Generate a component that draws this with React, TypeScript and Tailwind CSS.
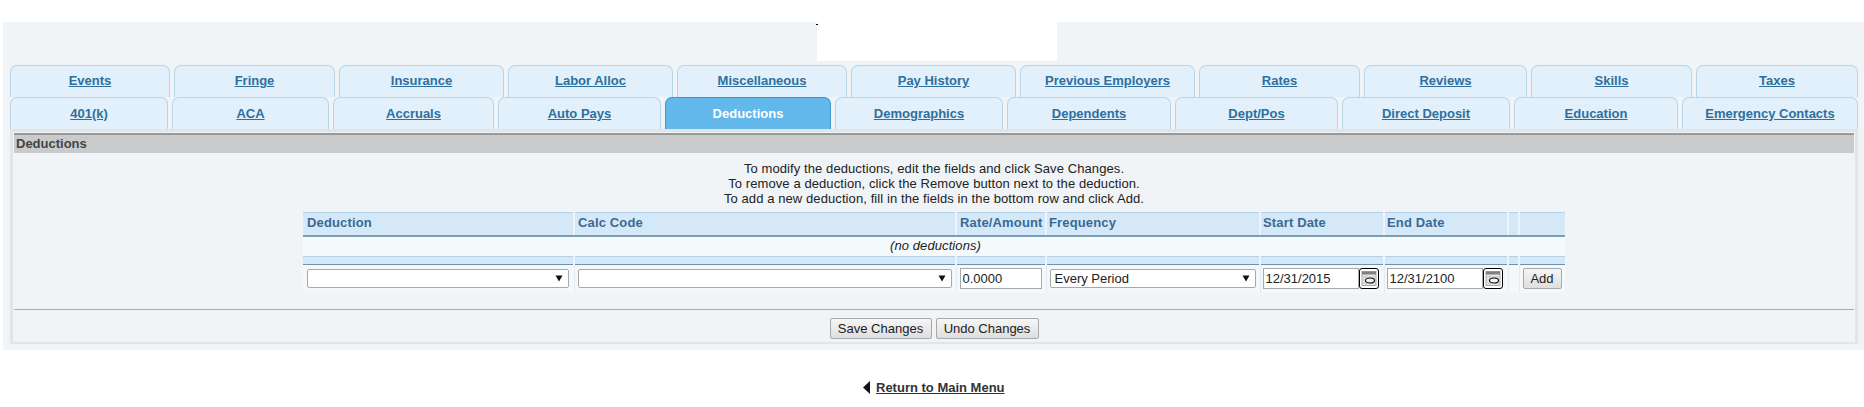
const topTabs = ["Events", "Fringe", "Insurance", "Labor Alloc", "Miscellaneous", "Pay History", "Previous Employers", "Rates", "Reviews", "Skills", "Taxes"];
const bottomTabs = ["401(k)", "ACA", "Accruals", "Auto Pays", "Deductions", "Demographics", "Dependents", "Dept/Pos", "Direct Deposit", "Education", "Emergency Contacts"];
const columns = [
  { label: "Deduction", width: 271, pad: "pl-[4px]" },
  { label: "Calc Code", width: 382, pad: "pl-[3px]" },
  { label: "Rate/Amount", width: 90, pad: "pl-[3px]" },
  { label: "Frequency", width: 214, pad: "pl-[2px]" },
  { label: "Start Date", width: 124, pad: "pl-[2px]" },
  { label: "End Date", width: 124, pad: "pl-[2px]" },
  { label: "", width: 11, pad: "" },
  { label: "", width: 46, pad: "" },
];

function Tab({ label, active, className }: { label: string; active?: boolean; className: string }) {
  return (
    <a
      href="#"
      className={
        active
          ? `flex h-[32px] items-center justify-center rounded-t-[7px] border border-b-0 border-[#3d95c9] bg-[#62b8ea] text-[13px] font-bold text-white ${className}`
          : `flex h-[32px] items-center justify-center rounded-t-[7px] border border-b-0 border-[#b9d5e9] bg-[#e1f0fa] text-[13px] font-bold text-[#2f6f9f] underline ${className}`
      }
    >
      {label}
    </a>
  );
}

function Select({ value, className }: { value?: string; className: string }) {
  return (
    <div className={`flex h-[19px] items-center justify-between rounded-[2px] border border-[#a9a9a9] bg-white pl-[4px] pr-[5px] text-[13px] text-[#222] ${className}`}>
      <span>{value}</span>
      <svg width="8" height="7" viewBox="0 0 8 7">
        <path d="M0.5 0.5H7.5L4 6.5Z" fill="#111" />
      </svg>
    </div>
  );
}

function DateField({ value }: { value: string }) {
  return (
    <div className="flex items-center">
      <input readOnly value={value} className="h-[21px] w-[96px] border border-[#a9a9a9] bg-white px-[2px] text-[13px] text-[#222] outline-none" />
      <button className="flex h-[21px] w-[20px] items-center justify-center rounded-[3px] border border-black bg-white">
        <svg width="16" height="17" viewBox="0 0 16 17">
          <rect x="1" y="1.5" width="14" height="14" fill="#e6e6e6" stroke="#a8a8a8" />
          <rect x="1" y="1.5" width="14" height="3" fill="#808080" />
          <path d="M1 7H15M1 10H15M1 13H15M5 4.5V15" stroke="#c4c4c4" />
          <ellipse cx="9" cy="10.5" rx="4.5" ry="2.5" fill="#f4f4f4" stroke="#111" strokeWidth="1.2" />
        </svg>
      </button>
    </div>
  );
}

function GrayButton({ label, className }: { label: string; className: string }) {
  return (
    <button className={`h-[21px] rounded-[2px] border border-[#a9a9a9] bg-gradient-to-b from-[#f6f6f6] to-[#dedede] text-[13px] text-[#222] ${className}`}>
      {label}
    </button>
  );
}

export default function App() {
  return (
    <div className="h-[407px] w-[1864px] overflow-hidden bg-white pt-[22px] font-['Liberation_Sans',Arial,sans-serif]">
      <div className="ml-[3px] h-[328px] bg-[#f0f4f7] pl-[7px] pr-[6px]">
        <div className="relative h-[43px]">
          <div className="absolute left-[807px] top-0 h-[39px] w-[240px] bg-white" />
          <div className="absolute left-[806px] top-[2px] h-[1px] w-[2px] bg-black" />
        </div>
        <div className="grid grid-cols-[160px_161px_165px_165px_170px_165px_175px_161px_163px_161px_162px] gap-[4px]">
          {topTabs.map((tab) => (
            <Tab key={tab} label={tab} className="pb-[1px]" />
          ))}
        </div>
        <div className="grid grid-cols-[158px_157px_161px_163px_166px_168px_164px_163px_168px_164px_176px] gap-[4px]">
          {bottomTabs.map((tab) => (
            <Tab key={tab} label={tab} active={tab === "Deductions"} className="pb-0" />
          ))}
        </div>
        <div className="h-[215px] border-[3px] border-b-[2px] border-[#e2e4e6] px-[1px] pt-[1px]">
          <div className="flex h-[20px] items-center border-t-[2px] border-[#999] bg-[#c9cacc] pl-[2px] text-[13px] font-bold text-[#444]">Deductions</div>
          <div className="mt-[8px] text-center text-[13px] leading-[15px] tracking-[0.09px] text-[#222]">
            <p>To modify the deductions, edit the fields and click Save Changes.</p>
            <p>To remove a deduction, click the Remove button next to the deduction.</p>
            <p>To add a new deduction, fill in the fields in the bottom row and click Add.</p>
          </div>
          <table className="mt-[6px] ml-[289px] table-fixed border-collapse text-[13px] leading-[16px]">
            <colgroup>
              {columns.map((col, i) => (
                <col key={i} width={col.width} />
              ))}
            </colgroup>
            <thead>
              <tr className="h-[23px] bg-[#d5e8f7]">
                {columns.map((col, i) => (
                  <th key={i} className={`border-t border-r-2 border-b-2 border-t-[#b3d2e8] border-r-[#eef5fa] border-b-[#7d9fb5] pb-[2px] text-left font-bold tracking-[0.15px] whitespace-nowrap text-[#3a6a94] last:border-r-0 ${col.pad}`}>
                    {col.label}
                  </th>
                ))}
              </tr>
            </thead>
            <tbody>
              <tr className="h-[21px] bg-[#f5fafd]">
                <td colSpan={8} className="pl-[3px] text-center text-[13px] tracking-[0.09px] text-[#222] italic">
                  (no deductions)
                </td>
              </tr>
              <tr className="h-[8px] bg-[#d5e8f7]">
                {columns.map((_, i) => (
                  <td key={i} className="border-t border-r-2 border-b border-t-[#b3d2e8] border-r-[#eef5fa] border-b-[#6f93ab] last:border-r-0" />
                ))}
              </tr>
              <tr className="h-[28px] bg-[#f5f8fa]">
                <td className="border-r border-[#e6ebef] pl-[4px]">
                  <Select className="w-[262px]" />
                </td>
                <td className="border-r border-[#e6ebef] pl-[3px]">
                  <Select className="w-[374px]" />
                </td>
                <td className="border-r border-[#e6ebef] pl-[3px]">
                  <input readOnly value="0.0000" className="h-[21px] w-[82px] border border-[#a9a9a9] bg-white px-[2px] text-[13px] text-[#222] outline-none" />
                </td>
                <td className="border-r border-[#e6ebef] pl-[3px]">
                  <Select value="Every Period" className="w-[206px]" />
                </td>
                <td className="border-r border-[#e6ebef] pl-[2px]">
                  <DateField value="12/31/2015" />
                </td>
                <td className="border-r border-[#e6ebef] pl-[2px]">
                  <DateField value="12/31/2100" />
                </td>
                <td className="border-r border-[#e6ebef]" />
                <td className="pl-[3px]">
                  <GrayButton label="Add" className="w-[39px]" />
                </td>
              </tr>
            </tbody>
          </table>
          <hr className="mt-[16px] border-[#aaa]" />
          <div className="mt-[8px] flex justify-center gap-[4px]">
            <GrayButton label="Save Changes" className="w-[102px]" />
            <GrayButton label="Undo Changes" className="w-[103px]" />
          </div>
        </div>
      </div>
      <div className="mt-[28px] ml-[863px] flex items-center gap-[6px]">
        <svg width="7" height="13" viewBox="0 0 7 13">
          <path d="M7 0V13L0 6.5Z" fill="#111" />
        </svg>
        <a href="#" className="text-[13px] font-bold text-[#333] underline">
          Return to Main Menu
        </a>
      </div>
    </div>
  );
}
